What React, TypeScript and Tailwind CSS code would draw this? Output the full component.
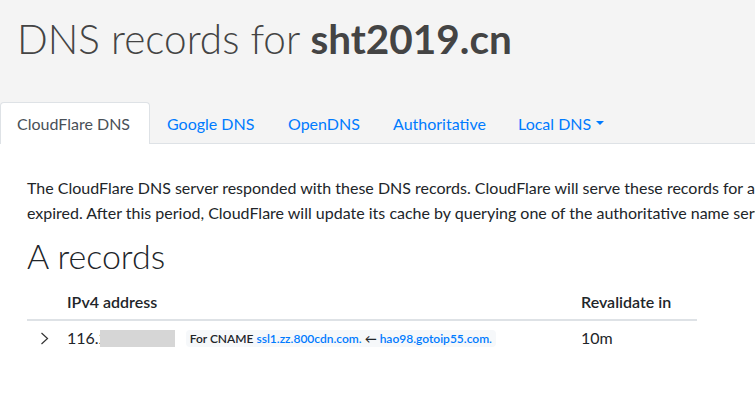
const tabs = [
  { label: "CloudFlare DNS", width: "w-[150px]", active: true },
  { label: "Google DNS", width: "w-[121px]" },
  { label: "OpenDNS", width: "w-[105px]" },
  { label: "Authoritative", width: "w-[125px]" },
  { label: "Local DNS", width: "w-[110px]", dropdown: true },
];

function Chevron() {
  return (
    <svg width="9" height="13" viewBox="0 0 9 13" fill="none" className="text-[#333]">
      <path d="M1.5 1 L7.5 6.5 L1.5 12" stroke="currentColor" strokeWidth="1.2" />
    </svg>
  );
}

export default function App() {
  return (
    <div className="w-[755px] h-[396px] overflow-hidden bg-white text-[#212529] font-['Lato','Liberation_Sans',sans-serif]">
      {/* header with title and tabs */}
      <div className="h-[144px] bg-[#f4f4f4] border-b border-[#dee2e6] flex flex-col justify-between">
        <h1 className="pt-[15px] pl-[17px] text-[40.5px] leading-[48px] font-light text-[#444] whitespace-nowrap">
          DNS records for <b className="font-bold">sht2019.cn</b>
        </h1>
        <div className="flex -mb-px">
          {tabs.map((t) => (
            <div
              key={t.label}
              className={`${t.width} h-[42px] shrink-0 px-4 flex items-center gap-[5px] text-[16px] whitespace-nowrap border border-b-0 rounded-t-[4px] ${
                t.active ? "bg-white border-[#dee2e6] text-[#495057]" : "border-transparent text-[#007bff]"
              }`}
            >
              {t.label}
              {t.dropdown && (
                <span className="inline-block w-0 h-0 border-x-[4px] border-x-transparent border-t-[4px] border-t-[#007bff] mb-[2px]" />
              )}
            </div>
          ))}
        </div>
      </div>

      <div className="pl-[27px]">
        <p className="pt-[31px] text-[16px] leading-[25px] whitespace-nowrap">
          The CloudFlare DNS server responded with these DNS records. CloudFlare will serve these records for as long as the Time to Live (TTL) has not
          <br />
          expired. After this period, CloudFlare will update its cache by querying one of the authoritative name servers.
        </p>

        <h2 className="mt-[11px] text-[34px] leading-[40px] font-light">A records</h2>

        {/* table */}
        <div className="w-[670px] text-[16px] leading-[24px]">
          <div className="flex pt-[14px] pb-[5px] border-b-2 border-[#dee2e6] font-semibold">
            <div className="w-[40px] shrink-0" />
            <div className="w-[514px] shrink-0">IPv4 address</div>
            <div className="flex-1">Revalidate in</div>
          </div>
          <div className="flex items-center h-[34px]">
            <div className="w-[40px] shrink-0 pl-[13px] flex items-center">
              <Chevron />
            </div>
            <div className="w-[514px] shrink-0 flex items-center">
              <span>116.</span>
              <span className="w-[1px] overflow-hidden">2</span>
              <span className="w-[75px] h-[17px] bg-[#d6d6d6]" />
              <span className="ml-[11px] h-[17px] px-[4px] rounded-[4px] bg-[#f6f8fa] text-[12px] leading-[17px] font-semibold whitespace-nowrap">
                For CNAME <span className="text-[#007bff]">ssl1.zz.800cdn.com.</span> ←{" "}
                <span className="text-[#007bff]">hao98.gotoip55.com.</span>
              </span>
            </div>
            <div className="flex-1">10m</div>
          </div>
        </div>
      </div>
    </div>
  );
}
